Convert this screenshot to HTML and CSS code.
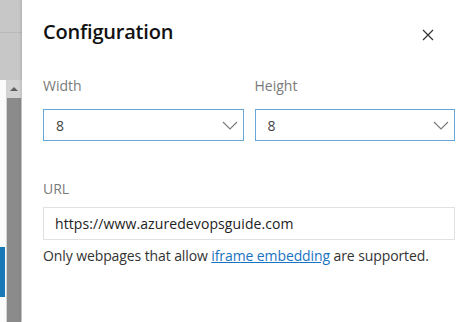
FILE: index.html
```html
<!DOCTYPE html>
<html>
<head>
<meta charset="utf-8">
<link rel="stylesheet" href="styles.css">
</head>
<body>
<div class="page">
  <div class="strip">
    <div class="strip-top"><div class="strip-line"></div></div>
    <div class="strip-bottom">
      <div class="strip-left"><div class="blue-bar"></div></div>
      <div class="scroll">
        <div class="scroll-arrow"><span class="tri"></span></div>
        <div class="scroll-thumb"></div>
      </div>
    </div>
  </div>
  <div class="panel">
    <div class="header">
      <h1 class="title">Configuration</h1>
      <button class="close" aria-label="Close">
        <svg width="12" height="12" viewBox="0 0 12 12"><path d="M1 1 L11 11 M11 1 L1 11" stroke="#333" stroke-width="1.2" fill="none"/></svg>
      </button>
    </div>
    <div class="row">
      <div class="field">
        <div class="label">Width</div>
        <div class="select"><span>8</span>
          <svg width="16" height="9" viewBox="0 0 16 9"><path d="M1 1 L8 8 L15 1" stroke="#777" stroke-width="1.1" fill="none"/></svg>
        </div>
      </div>
      <div class="field">
        <div class="label">Height</div>
        <div class="select"><span>8</span>
          <svg width="16" height="9" viewBox="0 0 16 9"><path d="M1 1 L8 8 L15 1" stroke="#777" stroke-width="1.1" fill="none"/></svg>
        </div>
      </div>
    </div>
    <div class="label url-label">URL</div>
    <div class="input">https://www.azuredevopsguide.com</div>
    <div class="help">Only webpages that allow <a href="#">iframe embedding</a> are supported.</div>
  </div>
</div>
</body>
</html>
```
FILE: styles.css
```css
* { box-sizing: border-box; }
html, body { margin: 0; padding: 0; }
body {
  width: 474px;
  height: 322px;
  overflow: hidden;
  font-family: "Open Sans", "Noto Sans", sans-serif;
  background: #fff;
}
.page {
  display: flex;
  height: 322px;
}
.strip {
  width: 22px;
  display: flex;
  flex-direction: column;
  background: #c9c9c9;
}
.strip-top {
  height: 80px;
  background: #c7c7c7;
  padding-top: 32px;
}
.strip-line {
  height: 1px;
  background: #b9b9b9;
}
.strip-bottom {
  flex: 1;
  display: flex;
}
.strip-left {
  width: 6px;
  background: #fbfbfb;
  padding-top: 167px;
}
.blue-bar {
  width: 5px;
  height: 50px;
  background: #1877b5;
}
.scroll {
  flex: 1;
  display: flex;
  flex-direction: column;
  background: #d3d3d3;
}
.scroll-arrow {
  height: 18px;
  display: flex;
  justify-content: center;
  align-items: center;
}
.tri {
  width: 0;
  height: 0;
  border-left: 4px solid transparent;
  border-right: 4px solid transparent;
  border-bottom: 4px solid #606060;
}
.scroll-thumb {
  flex: 1;
  margin: 0 1px 0 1px;
  background: #8b8b8b;
}
.panel {
  flex: 1;
  padding: 17px 19px 0 21px;
  display: flex;
  flex-direction: column;
  box-shadow: -1px 0 3px rgba(0,0,0,0.12);
}
.header {
  display: flex;
  justify-content: space-between;
  align-items: center;
  height: 30px;
}
.title {
  margin: 0;
  font-size: 20px;
  font-weight: 600;
  line-height: 30px;
  color: #111;
  letter-spacing: -0.2px;
}
.close {
  border: 0;
  background: none;
  padding: 0;
  width: 12px;
  height: 12px;
  margin: 6px 21px 0 0;
  display: flex;
}
.row {
  display: flex;
  gap: 11px;
  margin-top: 29px;
}
.field {
  flex: 1;
  display: flex;
  flex-direction: column;
}
.label {
  font-size: 14px;
  line-height: 20px;
  color: #7a7a7a;
  height: 20px;
}
.select {
  margin-top: 13px;
  height: 32px;
  border: 1px solid #66a7da;
  display: flex;
  align-items: center;
  justify-content: space-between;
  padding: 0 5px 0 12px;
  font-size: 14px;
  color: #444;
}
.url-label {
  margin-top: 38px;
}
.input {
  margin-top: 8px;
  height: 33px;
  border: 1px solid #e1e1e1;
  display: flex;
  align-items: center;
  padding-left: 11px;
  font-size: 14px;
  color: #222;
  letter-spacing: 0.1px;
}
.help {
  margin-top: 6px;
  font-size: 14px;
  line-height: 20px;
  color: #333;
  letter-spacing: -0.1px;
}
.help a {
  color: #1a73c0;
  text-decoration: underline;
}
```
